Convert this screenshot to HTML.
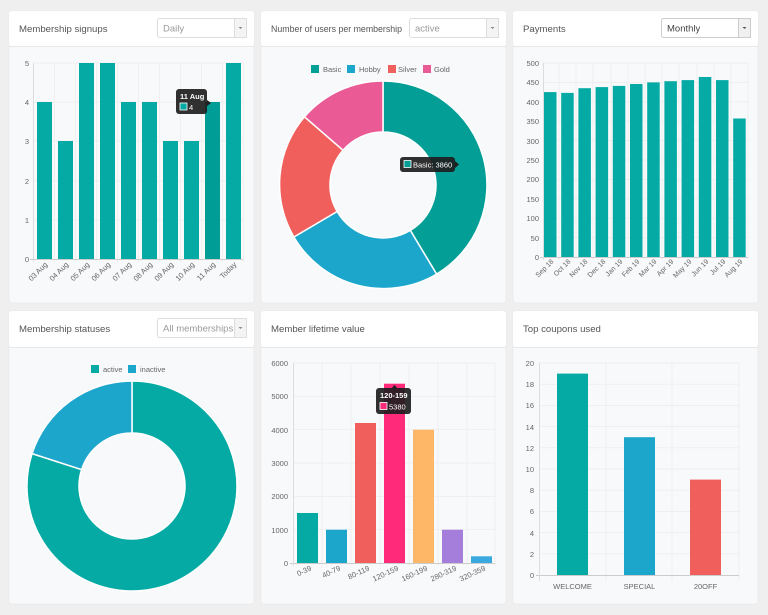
<!DOCTYPE html>
<html><head><meta charset="utf-8"><style>
html,body{margin:0;padding:0;background:#efefef;}
svg{display:block;font-family:"Liberation Sans",sans-serif;}
</style></head><body>
<svg width="768" height="615" viewBox="0 0 768 615" xmlns="http://www.w3.org/2000/svg">
<rect width="768" height="615" fill="#efefef"/>
<g>
<rect x="9" y="11" width="245" height="292" rx="3" fill="#f8f9fb" stroke="#e4e4e4" stroke-width="0.5"/>
<rect x="261" y="11" width="245" height="292" rx="3" fill="#f8f9fb" stroke="#e4e4e4" stroke-width="0.5"/>
<rect x="513" y="11" width="245" height="292" rx="3" fill="#f8f9fb" stroke="#e4e4e4" stroke-width="0.5"/>
<rect x="9" y="311" width="245" height="293" rx="3" fill="#f8f9fb" stroke="#e4e4e4" stroke-width="0.5"/>
<rect x="261" y="311" width="245" height="293" rx="3" fill="#f8f9fb" stroke="#e4e4e4" stroke-width="0.5"/>
<rect x="513" y="311" width="245" height="293" rx="3" fill="#f8f9fb" stroke="#e4e4e4" stroke-width="0.5"/>
<rect x="9" y="11" width="245" height="35" rx="3" fill="#fff"/>
<rect x="261" y="11" width="245" height="35" rx="3" fill="#fff"/>
<rect x="513" y="11" width="245" height="35" rx="3" fill="#fff"/>
<rect x="9" y="311" width="245" height="36" rx="3" fill="#fff"/>
<rect x="261" y="311" width="245" height="36" rx="3" fill="#fff"/>
<rect x="513" y="311" width="245" height="36" rx="3" fill="#fff"/>
<g stroke="#e8e8e8" stroke-width="1">
<line x1="9" y1="46.5" x2="254" y2="46.5"/><line x1="261" y1="46.5" x2="506" y2="46.5"/><line x1="513" y1="46.5" x2="758" y2="46.5"/>
<line x1="9" y1="347.5" x2="254" y2="347.5"/><line x1="261" y1="347.5" x2="506" y2="347.5"/><line x1="513" y1="347.5" x2="758" y2="347.5"/>
</g>
</g>
<g font-size="9.6" fill="#555">
<text x="19" y="32">Membership signups</text>
<text x="271" y="32" textLength="131" lengthAdjust="spacingAndGlyphs">Number of users per membership</text>
<text x="523" y="32">Payments</text>
<text x="19" y="332">Membership statuses</text>
<text x="271" y="332">Member lifetime value</text>
<text x="523" y="332">Top coupons used</text>
</g>
<g font-size="9.5">
<rect x="157.5" y="18.5" width="89" height="19" rx="2" fill="#fff" stroke="#ddd"/>
<rect x="234.5" y="18.5" width="12" height="19" fill="#f4f4f4" stroke="#ddd"/>
<path d="M238.5 27 l2 2 l2 -2z" fill="#888"/>
<text x="163" y="31.5" fill="#999">Daily</text>
<rect x="409.5" y="18.5" width="89" height="19" rx="2" fill="#fff" stroke="#ddd"/>
<rect x="486.5" y="18.5" width="12" height="19" fill="#f4f4f4" stroke="#ddd"/>
<path d="M490.5 27 l2 2 l2 -2z" fill="#888"/>
<text x="415" y="31.5" fill="#999">active</text>
<rect x="661.5" y="18.5" width="89" height="19" rx="2" fill="#fff" stroke="#ccc"/>
<rect x="738.5" y="18.5" width="12" height="19" fill="#f0f0f0" stroke="#ccc"/>
<path d="M742.5 27 l2 2 l2 -2z" fill="#555"/>
<text x="667" y="31.5" fill="#444">Monthly</text>
<rect x="157.5" y="318.5" width="89" height="19" rx="2" fill="#fff" stroke="#ddd"/>
<rect x="234.5" y="318.5" width="12" height="19" fill="#f4f4f4" stroke="#ddd"/>
<path d="M238.5 327 l2 2 l2 -2z" fill="#888"/>
<text x="163" y="331.5" fill="#999">All memberships</text>
</g>

<g stroke="#ececec" stroke-width="0.7">
<line x1="33" y1="63" x2="243" y2="63"/><line x1="33" y1="102" x2="243" y2="102"/><line x1="33" y1="141" x2="243" y2="141"/><line x1="33" y1="181" x2="243" y2="181"/><line x1="33" y1="220" x2="243" y2="220"/>
<line x1="54.5" y1="63" x2="54.5" y2="262"/><line x1="75.5" y1="63" x2="75.5" y2="262"/><line x1="96.5" y1="63" x2="96.5" y2="262"/><line x1="117.5" y1="63" x2="117.5" y2="262"/><line x1="138.5" y1="63" x2="138.5" y2="262"/><line x1="159.5" y1="63" x2="159.5" y2="262"/><line x1="180.5" y1="63" x2="180.5" y2="262"/><line x1="201.5" y1="63" x2="201.5" y2="262"/><line x1="222.5" y1="63" x2="222.5" y2="262"/><line x1="243.5" y1="63" x2="243.5" y2="262"/>
</g>
<line x1="30" y1="259.5" x2="243" y2="259.5" stroke="#ccc"/><line x1="33.5" y1="63" x2="33.5" y2="262" stroke="#ddd"/>
<g font-size="7.5" fill="#666" text-anchor="end">
<text x="29" y="66">5</text><text x="29" y="105">4</text><text x="29" y="144">3</text><text x="29" y="184">2</text><text x="29" y="223">1</text><text x="29" y="262">0</text>
</g>
<g fill="#05aaa5">
<rect x="37" y="102" width="15" height="157"/><rect x="58" y="141" width="15" height="118"/><rect x="79" y="63" width="15" height="196"/><rect x="100" y="63" width="15" height="196"/><rect x="121" y="102" width="15" height="157"/><rect x="142" y="102" width="15" height="157"/><rect x="163" y="141" width="15" height="118"/><rect x="184" y="141" width="15" height="118"/><rect x="205" y="102" width="15" height="157" fill="#009d96"/><rect x="226" y="63" width="15" height="196"/>
</g>
<g font-size="7.5" fill="#666" text-anchor="end">
<text transform="translate(48,265) rotate(-45)">03 Aug</text><text transform="translate(69,265) rotate(-45)">04 Aug</text><text transform="translate(90,265) rotate(-45)">05 Aug</text><text transform="translate(111,265) rotate(-45)">06 Aug</text><text transform="translate(132,265) rotate(-45)">07 Aug</text><text transform="translate(153,265) rotate(-45)">08 Aug</text><text transform="translate(174,265) rotate(-45)">09 Aug</text><text transform="translate(195,265) rotate(-45)">10 Aug</text><text transform="translate(216,265) rotate(-45)">11 Aug</text><text transform="translate(237,265) rotate(-45)">Today</text>
</g>
<rect x="176" y="89" width="31" height="25" rx="3" fill="#1e1e1e" opacity="0.92"/>
<path d="M207 100 l4 3 l-4 3z" fill="#1e1e1e"/>
<text x="180" y="99" font-size="7.5" font-weight="bold" fill="#fff">11 Aug</text>
<rect x="180" y="103" width="7" height="7" fill="#05aaa5" stroke="#fff" stroke-width="0.8"/>
<text x="189" y="110" font-size="7.5" fill="#fff">4</text>

<g font-size="7.5" fill="#666">
<rect x="311" y="65" width="8" height="8" fill="#039e96"/><text x="323" y="72">Basic</text>
<rect x="347" y="65" width="8" height="8" fill="#1ca6cb"/><text x="359" y="72">Hobby</text>
<rect x="388" y="65" width="8" height="8" fill="#f05f5c"/><text x="398" y="72">Silver</text>
<rect x="423" y="65" width="8" height="8" fill="#ea5a95"/><text x="434" y="72">Gold</text>
</g>
<g stroke="#fff" stroke-width="1.5">
<path d="M383,81 A104,104 0 0 1 436.6,274.1 L410.3,230.4 A53,53 0 0 0 383,132 Z" fill="#039e96"/>
<path d="M436.6,274.1 A104,104 0 0 1 293.9,237 L337.1,211.5 A53,53 0 0 0 410.3,230.4 Z" fill="#1ca6cb"/>
<path d="M293.9,237 A104,104 0 0 1 304.5,116.8 L343,150.2 A53,53 0 0 0 337.1,211.5 Z" fill="#f05f5c"/>
<path d="M304.5,116.8 A104,104 0 0 1 383,81 L383,132 A53,53 0 0 0 343,150.2 Z" fill="#ea5a95"/>
</g>
<rect x="400" y="157" width="55" height="15" rx="3" fill="#1e1e1e" opacity="0.92"/>
<path d="M455 161 l4 3.5 l-4 3.5z" fill="#1e1e1e"/>
<rect x="404" y="160.5" width="7" height="7" fill="#039e96" stroke="#fff" stroke-width="0.8"/>
<text x="413" y="167.5" font-size="7.5" fill="#fff">Basic: 3860</text>

<g stroke="#ececec" stroke-width="0.7">
<line x1="543" y1="63" x2="748" y2="63"/><line x1="543" y1="82.4" x2="748" y2="82.4"/><line x1="543" y1="101.8" x2="748" y2="101.8"/><line x1="543" y1="121.2" x2="748" y2="121.2"/><line x1="543" y1="140.6" x2="748" y2="140.6"/><line x1="543" y1="160" x2="748" y2="160"/><line x1="543" y1="179.4" x2="748" y2="179.4"/><line x1="543" y1="198.8" x2="748" y2="198.8"/><line x1="543" y1="218.2" x2="748" y2="218.2"/><line x1="543" y1="237.6" x2="748" y2="237.6"/>
<line x1="559" y1="63" x2="559" y2="260"/><line x1="576" y1="63" x2="576" y2="260"/><line x1="593" y1="63" x2="593" y2="260"/><line x1="611" y1="63" x2="611" y2="260"/><line x1="628" y1="63" x2="628" y2="260"/><line x1="645" y1="63" x2="645" y2="260"/><line x1="662" y1="63" x2="662" y2="260"/><line x1="679" y1="63" x2="679" y2="260"/><line x1="697" y1="63" x2="697" y2="260"/><line x1="714" y1="63" x2="714" y2="260"/><line x1="731" y1="63" x2="731" y2="260"/><line x1="748" y1="63" x2="748" y2="260"/>
</g>
<line x1="540" y1="257.5" x2="748" y2="257.5" stroke="#ccc"/><line x1="543.5" y1="63" x2="543.5" y2="260" stroke="#ddd"/>
<g font-size="7.5" fill="#666" text-anchor="end">
<text x="539" y="66">500</text><text x="539" y="85">450</text><text x="539" y="105">400</text><text x="539" y="124">350</text><text x="539" y="144">300</text><text x="539" y="163">250</text><text x="539" y="182">200</text><text x="539" y="202">150</text><text x="539" y="221">100</text><text x="539" y="241">50</text><text x="539" y="260">0</text>
</g>
<g fill="#05aaa5">
<rect x="544" y="92.1" width="12.5" height="164.9"/><rect x="561.2" y="92.9" width="12.5" height="164.1"/><rect x="578.4" y="88.2" width="12.5" height="168.8"/><rect x="595.6" y="87.1" width="12.5" height="169.9"/><rect x="612.8" y="85.9" width="12.5" height="171.1"/><rect x="630" y="84" width="12.5" height="173"/><rect x="647.2" y="82.4" width="12.5" height="174.6"/><rect x="664.4" y="81.2" width="12.5" height="175.8"/><rect x="681.6" y="80.1" width="12.5" height="176.9"/><rect x="698.8" y="77" width="12.5" height="180"/><rect x="716" y="80.1" width="12.5" height="176.9"/><rect x="733.2" y="118.5" width="12.5" height="138.5"/>
</g>
<g font-size="7" fill="#666" text-anchor="end">
<text transform="translate(554,262) rotate(-45)">Sep 18</text><text transform="translate(571,262) rotate(-45)">Oct 18</text><text transform="translate(588,262) rotate(-45)">Nov 18</text><text transform="translate(606,262) rotate(-45)">Dec 18</text><text transform="translate(623,262) rotate(-45)">Jan 19</text><text transform="translate(640,262) rotate(-45)">Feb 19</text><text transform="translate(657,262) rotate(-45)">Mar 19</text><text transform="translate(674,262) rotate(-45)">Apr 19</text><text transform="translate(692,262) rotate(-45)">May 19</text><text transform="translate(709,262) rotate(-45)">Jun 19</text><text transform="translate(726,262) rotate(-45)">Jul 19</text><text transform="translate(743,262) rotate(-45)">Aug 19</text>
</g>

<g font-size="7.5" fill="#666">
<rect x="91" y="365" width="8" height="8" fill="#05aaa5"/><text x="103" y="372">active</text>
<rect x="128" y="365" width="8" height="8" fill="#1ca6cb"/><text x="140" y="372">inactive</text>
</g>
<g stroke="#fff" stroke-width="1.5">
<path d="M132,381 A105,105 0 1 1 32.1,453.6 L81.6,469.6 A53,53 0 1 0 132,433 Z" fill="#05aaa5"/>
<path d="M32.1,453.6 A105,105 0 0 1 132,381 L132,433 A53,53 0 0 0 81.6,469.6 Z" fill="#1ca6cb"/>
</g>

<g stroke="#ececec" stroke-width="0.7">
<line x1="293" y1="363" x2="495" y2="363"/><line x1="293" y1="396.3" x2="495" y2="396.3"/><line x1="293" y1="429.7" x2="495" y2="429.7"/><line x1="293" y1="463" x2="495" y2="463"/><line x1="293" y1="496.3" x2="495" y2="496.3"/><line x1="293" y1="529.7" x2="495" y2="529.7"/>
<line x1="322" y1="363" x2="322" y2="566"/><line x1="351" y1="363" x2="351" y2="566"/><line x1="380" y1="363" x2="380" y2="566"/><line x1="409" y1="363" x2="409" y2="566"/><line x1="438" y1="363" x2="438" y2="566"/><line x1="467" y1="363" x2="467" y2="566"/><line x1="495" y1="363" x2="495" y2="566"/>
</g>
<line x1="290" y1="563.5" x2="495" y2="563.5" stroke="#ccc"/><line x1="293.5" y1="363" x2="293.5" y2="566" stroke="#ddd"/>
<g font-size="7.5" fill="#666" text-anchor="end">
<text x="288" y="366">6000</text><text x="288" y="399">5000</text><text x="288" y="433">4000</text><text x="288" y="466">3000</text><text x="288" y="499">2000</text><text x="288" y="533">1000</text><text x="288" y="566">0</text>
</g>
<rect x="297" y="513" width="21" height="50" fill="#05aaa5"/>
<rect x="326" y="529.7" width="21" height="33.3" fill="#1ca6cb"/>
<rect x="355" y="423" width="21" height="140" fill="#f05f5c"/>
<rect x="384" y="383.7" width="21" height="179.3" fill="#ff2a7a"/>
<rect x="413" y="429.7" width="21" height="133.3" fill="#fdb766"/>
<rect x="442" y="529.7" width="21" height="33.3" fill="#a57ddb"/>
<rect x="471" y="556.3" width="21" height="6.7" fill="#3aa9e0"/>
<g font-size="7.5" fill="#666" text-anchor="end">
<text transform="translate(312,570) rotate(-25)">0-39</text><text transform="translate(341,570) rotate(-25)">40-79</text><text transform="translate(370,570) rotate(-25)">80-119</text><text transform="translate(399,570) rotate(-25)">120-159</text><text transform="translate(428,570) rotate(-25)">160-199</text><text transform="translate(457,570) rotate(-25)">280-319</text><text transform="translate(486,570) rotate(-25)">320-359</text>
</g>
<path d="M394.5 385 l3 3.5 h-6z" fill="#1e1e1e"/>
<rect x="376" y="388" width="35" height="26" rx="3" fill="#1e1e1e" opacity="0.92"/>
<text x="380" y="398" font-size="7.5" font-weight="bold" fill="#fff">120-159</text>
<rect x="380" y="402.5" width="7" height="7" fill="#ff2a7a" stroke="#fff" stroke-width="0.8"/>
<text x="389" y="409.5" font-size="7.5" fill="#fff">5380</text>

<g stroke="#ececec" stroke-width="0.7">
<line x1="539" y1="363" x2="739" y2="363"/><line x1="539" y1="384.2" x2="739" y2="384.2"/><line x1="539" y1="405.4" x2="739" y2="405.4"/><line x1="539" y1="426.6" x2="739" y2="426.6"/><line x1="539" y1="447.8" x2="739" y2="447.8"/><line x1="539" y1="469" x2="739" y2="469"/><line x1="539" y1="490.2" x2="739" y2="490.2"/><line x1="539" y1="511.4" x2="739" y2="511.4"/><line x1="539" y1="532.6" x2="739" y2="532.6"/><line x1="539" y1="553.8" x2="739" y2="553.8"/>
<line x1="606" y1="363" x2="606" y2="581"/><line x1="672" y1="363" x2="672" y2="581"/><line x1="739" y1="363" x2="739" y2="581"/>
</g>
<line x1="536" y1="575.5" x2="739" y2="575.5" stroke="#ccc"/><line x1="539.5" y1="363" x2="539.5" y2="581" stroke="#ddd"/>
<g font-size="7.5" fill="#666" text-anchor="end">
<text x="534" y="366">20</text><text x="534" y="387">18</text><text x="534" y="408">16</text><text x="534" y="430">14</text><text x="534" y="451">12</text><text x="534" y="472">10</text><text x="534" y="493">8</text><text x="534" y="514">6</text><text x="534" y="536">4</text><text x="534" y="557">2</text><text x="534" y="578">0</text>
</g>
<rect x="557" y="373.6" width="31" height="201.4" fill="#05aaa5"/>
<rect x="624" y="437.2" width="31" height="137.8" fill="#1ca6cb"/>
<rect x="690" y="479.6" width="31" height="95.4" fill="#f05f5c"/>
<g font-size="7.5" fill="#666" text-anchor="middle">
<text x="572.5" y="589">WELCOME</text><text x="639.5" y="589">SPECIAL</text><text x="705.5" y="589">20OFF</text>
</g>
</svg>
</body></html>
